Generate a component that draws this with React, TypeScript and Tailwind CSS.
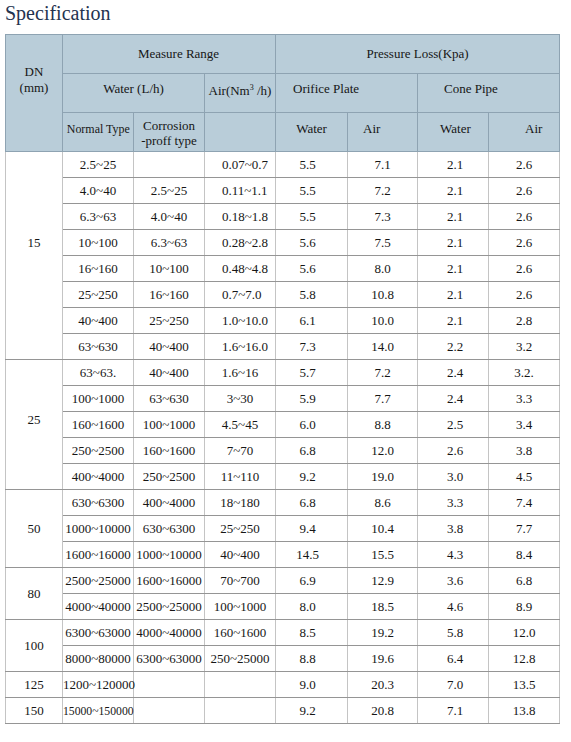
type Row = string[];

interface Group {
  dn: string;
  rows: Row[];
  dnClass?: string;
  airLeft?: boolean;
}

const groups: Group[] = [
  {
    dn: "15",
    dnClass: "pb-[26px]",
    airLeft: true,
    rows: [
      ["2.5~25", "", "0.07~0.7", "5.5", "7.1", "2.1", "2.6"],
      ["4.0~40", "2.5~25", "0.11~1.1", "5.5", "7.2", "2.1", "2.6"],
      ["6.3~63", "4.0~40", "0.18~1.8", "5.5", "7.3", "2.1", "2.6"],
      ["10~100", "6.3~63", "0.28~2.8", "5.6", "7.5", "2.1", "2.6"],
      ["16~160", "10~100", "0.48~4.8", "5.6", "8.0", "2.1", "2.6"],
      ["25~250", "16~160", "0.7~7.0", "5.8", "10.8", "2.1", "2.6"],
      ["40~400", "25~250", "1.0~10.0", "6.1", "10.0", "2.1", "2.8"],
      ["63~630", "40~400", "1.6~16.0", "7.3", "14.0", "2.2", "3.2"],
    ],
  },
  {
    dn: "25",
    dnClass: "pb-[10px]",
    rows: [
      ["63~63.", "40~400", "1.6~16", "5.7", "7.2", "2.4", "3.2."],
      ["100~1000", "63~630", "3~30", "5.9", "7.7", "2.4", "3.3"],
      ["160~1600", "100~1000", "4.5~45", "6.0", "8.8", "2.5", "3.4"],
      ["250~2500", "160~1600", "7~70", "6.8", "12.0", "2.6", "3.8"],
      ["400~4000", "250~2500", "11~110", "9.2", "19.0", "3.0", "4.5"],
    ],
  },
  {
    dn: "50",
    rows: [
      ["630~6300", "400~4000", "18~180", "6.8", "8.6", "3.3", "7.4"],
      ["1000~10000", "630~6300", "25~250", "9.4", "10.4", "3.8", "7.7"],
      ["1600~16000", "1000~10000", "40~400", "14.5", "15.5", "4.3", "8.4"],
    ],
  },
  {
    dn: "80",
    rows: [
      ["2500~25000", "1600~16000", "70~700", "6.9", "12.9", "3.6", "6.8"],
      ["4000~40000", "2500~25000", "100~1000", "8.0", "18.5", "4.6", "8.9"],
    ],
  },
  {
    dn: "100",
    rows: [
      ["6300~63000", "4000~40000", "160~1600", "8.5", "19.2", "5.8", "12.0"],
      ["8000~80000", "6300~63000", "250~25000", "8.8", "19.6", "6.4", "12.8"],
    ],
  },
  {
    dn: "125",
    rows: [["1200~120000", "", "", "9.0", "20.3", "7.0", "13.5"]],
  },
  {
    dn: "150",
    rows: [["15000~150000", "", "", "9.2", "20.8", "7.1", "13.8"]],
  },
];

const th = "border border-[#8ea3b2] bg-[#b9cdd9] font-normal p-0 h-[39px] align-middle";
const td =
  "border border-[#c4c4c4] border-t-[#959595] border-b-[#959595] h-[26px] p-0 align-middle whitespace-nowrap";

// the widest range is squeezed so it stays inside its cell
function Val({ v }: { v: string }) {
  if (v.length > 11) {
    return <span className="inline-block scale-x-[0.9] -mx-[4px]">{v}</span>;
  }
  return <>{v}</>;
}

export default function App() {
  return (
    <div className="w-[571px] h-[742px] bg-white pl-[5px] font-['Liberation_Serif','Times_New_Roman',serif]">
      <div className="h-[34px] pt-[2px] text-[20px] leading-[23px] text-[#24334f]">
        Specification
      </div>
      <table className="border-collapse table-fixed w-[554px] text-[13px] leading-[16px] text-[#161616]">
        <colgroup>
          <col className="w-[57px]" />
          <col className="w-[71px]" />
          <col className="w-[71px]" />
          <col className="w-[71px]" />
          <col className="w-[72px]" />
          <col className="w-[70px]" />
          <col className="w-[71px]" />
          <col className="w-[71px]" />
        </colgroup>
        <thead>
          <tr>
            <th rowSpan={3} className={th + " align-top pt-[29px]"}>
              DN
              <br />
              (mm)
            </th>
            <th colSpan={3} className={th + " pl-[19px]"}>
              Measure Range
            </th>
            <th colSpan={4} className={th}>
              Pressure Loss(Kpa)
            </th>
          </tr>
          <tr>
            <th colSpan={2} className={th + " pb-[8px]"}>
              Water (L/h)
            </th>
            <th className={th + " pb-[8px]"}>
              Air(Nm<span className="text-[8px] align-[5px]">3</span> /h)
            </th>
            <th colSpan={2} className={th + " pb-[8px] text-left pl-[17px]"}>
              Orifice Plate
            </th>
            <th colSpan={2} className={th + " pb-[8px] text-left pl-[26px]"}>
              Cone Pipe
            </th>
          </tr>
          <tr>
            <th className={th + " pb-[6px]"}>
              <span className="inline-block scale-x-[0.92] -mx-[3px]">Normal Type</span>
            </th>
            <th className={th + " leading-[15px] pt-[2px]"}>
              Corrosion
              <br />
              -proff type
            </th>
            <th className={th}></th>
            <th className={th + " pb-[6px]"}>Water</th>
            <th className={th + " pb-[6px] text-left pl-[15px]"}>Air</th>
            <th className={th + " pb-[6px] text-left pl-[22px]"}>Water</th>
            <th className={th + " pb-[6px] text-left pl-[36px]"}>Air</th>
          </tr>
        </thead>
        <tbody>
          {groups.map((g) =>
            g.rows.map((r, i) => (
              <tr key={g.dn + "-" + i}>
                {i === 0 && (
                  <td
                    rowSpan={g.rows.length}
                    className={td + " border-l-[#c4c4c4] text-center " + (g.dnClass ?? "")}
                  >
                    {g.dn}
                  </td>
                )}
                <td className={td + " text-center"}>
                  <Val v={r[0]} />
                </td>
                <td className={td + " text-center"}>
                  <Val v={r[1]} />
                </td>
                <td className={td + (g.airLeft ? " text-left pl-[17px]" : " text-center")}>
                  {r[2]}
                </td>
                <td className={td + " text-center pr-[8px]"}>{r[3]}</td>
                <td className={td + " text-center"}>{r[4]}</td>
                <td className={td + " text-center pl-[4px]"}>{r[5]}</td>
                <td className={td + " text-center"}>{r[6]}</td>
              </tr>
            ))
          )}
        </tbody>
      </table>
    </div>
  );
}
